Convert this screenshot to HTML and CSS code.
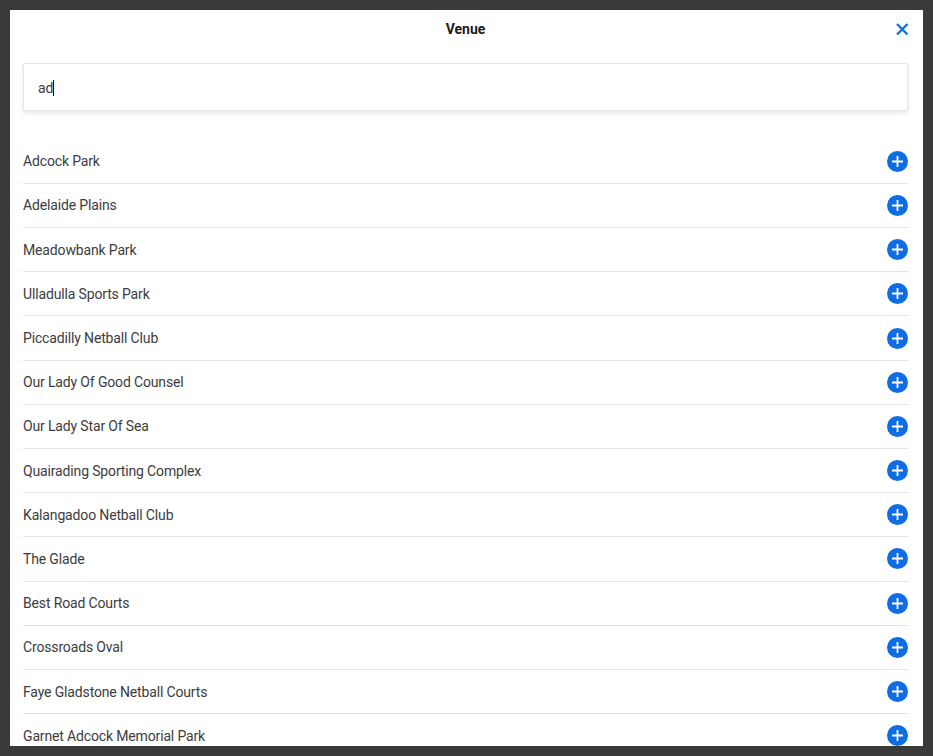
FILE: index.html
```html
<!DOCTYPE html>
<html lang="en">
<head>
<meta charset="utf-8">
<title>Venue</title>
<link rel="stylesheet" href="styles.css">
</head>
<body>
<main class="modal">
  <header class="modal-head">
    <h1 class="modal-title">Venue</h1>
    <button class="close" aria-label="Close">
      <svg viewBox="0 0 14 14" width="14" height="14"><path d="M2 2l10.5 10.5M12.5 2L2 12.5" fill="none" stroke="#0f6de3" stroke-width="2.3"/></svg>
    </button>
  </header>
  <div class="search"><span class="search-value">ad</span><span class="caret"></span></div>
  <ul class="list">
    <li class="row"><span class="name">Adcock Park</span><span class="add"><svg viewBox="0 0 21 21" width="21" height="21"><circle cx="10.5" cy="10.5" r="10.5" fill="#0f6de3"/><path d="M10.5 5v11M5 10.5h11" stroke="#fff" stroke-width="1.8" fill="none"/></svg></span></li>
    <li class="row"><span class="name">Adelaide Plains</span><span class="add"><svg viewBox="0 0 21 21" width="21" height="21"><circle cx="10.5" cy="10.5" r="10.5" fill="#0f6de3"/><path d="M10.5 5v11M5 10.5h11" stroke="#fff" stroke-width="1.8" fill="none"/></svg></span></li>
    <li class="row"><span class="name">Meadowbank Park</span><span class="add"><svg viewBox="0 0 21 21" width="21" height="21"><circle cx="10.5" cy="10.5" r="10.5" fill="#0f6de3"/><path d="M10.5 5v11M5 10.5h11" stroke="#fff" stroke-width="1.8" fill="none"/></svg></span></li>
    <li class="row"><span class="name">Ulladulla Sports Park</span><span class="add"><svg viewBox="0 0 21 21" width="21" height="21"><circle cx="10.5" cy="10.5" r="10.5" fill="#0f6de3"/><path d="M10.5 5v11M5 10.5h11" stroke="#fff" stroke-width="1.8" fill="none"/></svg></span></li>
    <li class="row"><span class="name">Piccadilly Netball Club</span><span class="add"><svg viewBox="0 0 21 21" width="21" height="21"><circle cx="10.5" cy="10.5" r="10.5" fill="#0f6de3"/><path d="M10.5 5v11M5 10.5h11" stroke="#fff" stroke-width="1.8" fill="none"/></svg></span></li>
    <li class="row"><span class="name">Our Lady Of Good Counsel</span><span class="add"><svg viewBox="0 0 21 21" width="21" height="21"><circle cx="10.5" cy="10.5" r="10.5" fill="#0f6de3"/><path d="M10.5 5v11M5 10.5h11" stroke="#fff" stroke-width="1.8" fill="none"/></svg></span></li>
    <li class="row"><span class="name">Our Lady Star Of Sea</span><span class="add"><svg viewBox="0 0 21 21" width="21" height="21"><circle cx="10.5" cy="10.5" r="10.5" fill="#0f6de3"/><path d="M10.5 5v11M5 10.5h11" stroke="#fff" stroke-width="1.8" fill="none"/></svg></span></li>
    <li class="row"><span class="name">Quairading Sporting Complex</span><span class="add"><svg viewBox="0 0 21 21" width="21" height="21"><circle cx="10.5" cy="10.5" r="10.5" fill="#0f6de3"/><path d="M10.5 5v11M5 10.5h11" stroke="#fff" stroke-width="1.8" fill="none"/></svg></span></li>
    <li class="row"><span class="name">Kalangadoo Netball Club</span><span class="add"><svg viewBox="0 0 21 21" width="21" height="21"><circle cx="10.5" cy="10.5" r="10.5" fill="#0f6de3"/><path d="M10.5 5v11M5 10.5h11" stroke="#fff" stroke-width="1.8" fill="none"/></svg></span></li>
    <li class="row"><span class="name">The Glade</span><span class="add"><svg viewBox="0 0 21 21" width="21" height="21"><circle cx="10.5" cy="10.5" r="10.5" fill="#0f6de3"/><path d="M10.5 5v11M5 10.5h11" stroke="#fff" stroke-width="1.8" fill="none"/></svg></span></li>
    <li class="row"><span class="name">Best Road Courts</span><span class="add"><svg viewBox="0 0 21 21" width="21" height="21"><circle cx="10.5" cy="10.5" r="10.5" fill="#0f6de3"/><path d="M10.5 5v11M5 10.5h11" stroke="#fff" stroke-width="1.8" fill="none"/></svg></span></li>
    <li class="row"><span class="name">Crossroads Oval</span><span class="add"><svg viewBox="0 0 21 21" width="21" height="21"><circle cx="10.5" cy="10.5" r="10.5" fill="#0f6de3"/><path d="M10.5 5v11M5 10.5h11" stroke="#fff" stroke-width="1.8" fill="none"/></svg></span></li>
    <li class="row"><span class="name">Faye Gladstone Netball Courts</span><span class="add"><svg viewBox="0 0 21 21" width="21" height="21"><circle cx="10.5" cy="10.5" r="10.5" fill="#0f6de3"/><path d="M10.5 5v11M5 10.5h11" stroke="#fff" stroke-width="1.8" fill="none"/></svg></span></li>
    <li class="row"><span class="name">Garnet Adcock Memorial Park</span><span class="add"><svg viewBox="0 0 21 21" width="21" height="21"><circle cx="10.5" cy="10.5" r="10.5" fill="#0f6de3"/><path d="M10.5 5v11M5 10.5h11" stroke="#fff" stroke-width="1.8" fill="none"/></svg></span></li>
  </ul>
</main>
</body>
</html>
```

FILE: styles.css
```css
html, body {
  margin: 0;
  height: 100%;
}
body {
  background: #3a3b39;
  padding: 10px;
  box-sizing: border-box;
  overflow: hidden;
  font-family: "Roboto", "Liberation Sans", sans-serif;
  color: #3c3c3c;
}
.modal {
  height: 736px;
  background: #fff;
  padding: 0 15px 0 13px;
  overflow: hidden;
}
.modal-head {
  height: 38px;
  display: flex;
  align-items: center;
  justify-content: center;
  position: relative;
}
.modal-title {
  margin: 0;
  font-size: 14px;
  font-weight: 700;
  color: #1a1a1a;
}
.close {
  position: absolute;
  right: -1px;
  top: 12px;
  padding: 0;
  border: 0;
  background: none;
  line-height: 0;
}
.search {
  margin-top: 15px;
  height: 48px;
  box-sizing: border-box;
  border: 1px solid #e6e6e6;
  border-radius: 2px;
  box-shadow: 0 2px 4px rgba(60, 60, 90, 0.14);
  padding: 1px 0 0 14px;
  display: flex;
  align-items: center;
  font-size: 14px;
  letter-spacing: -0.15px;
}
.caret {
  width: 1px;
  height: 16px;
  background: #111;
}
.list {
  list-style: none;
  margin: 28.7px 0 0;
  padding: 0;
}
.row {
  height: 44.2px;
  box-sizing: border-box;
  border-bottom: 1px solid #e3e3e3;
  display: flex;
  align-items: center;
  justify-content: space-between;
  font-size: 14px;
  letter-spacing: -0.15px;
}
.add {
  line-height: 0;
}
```
